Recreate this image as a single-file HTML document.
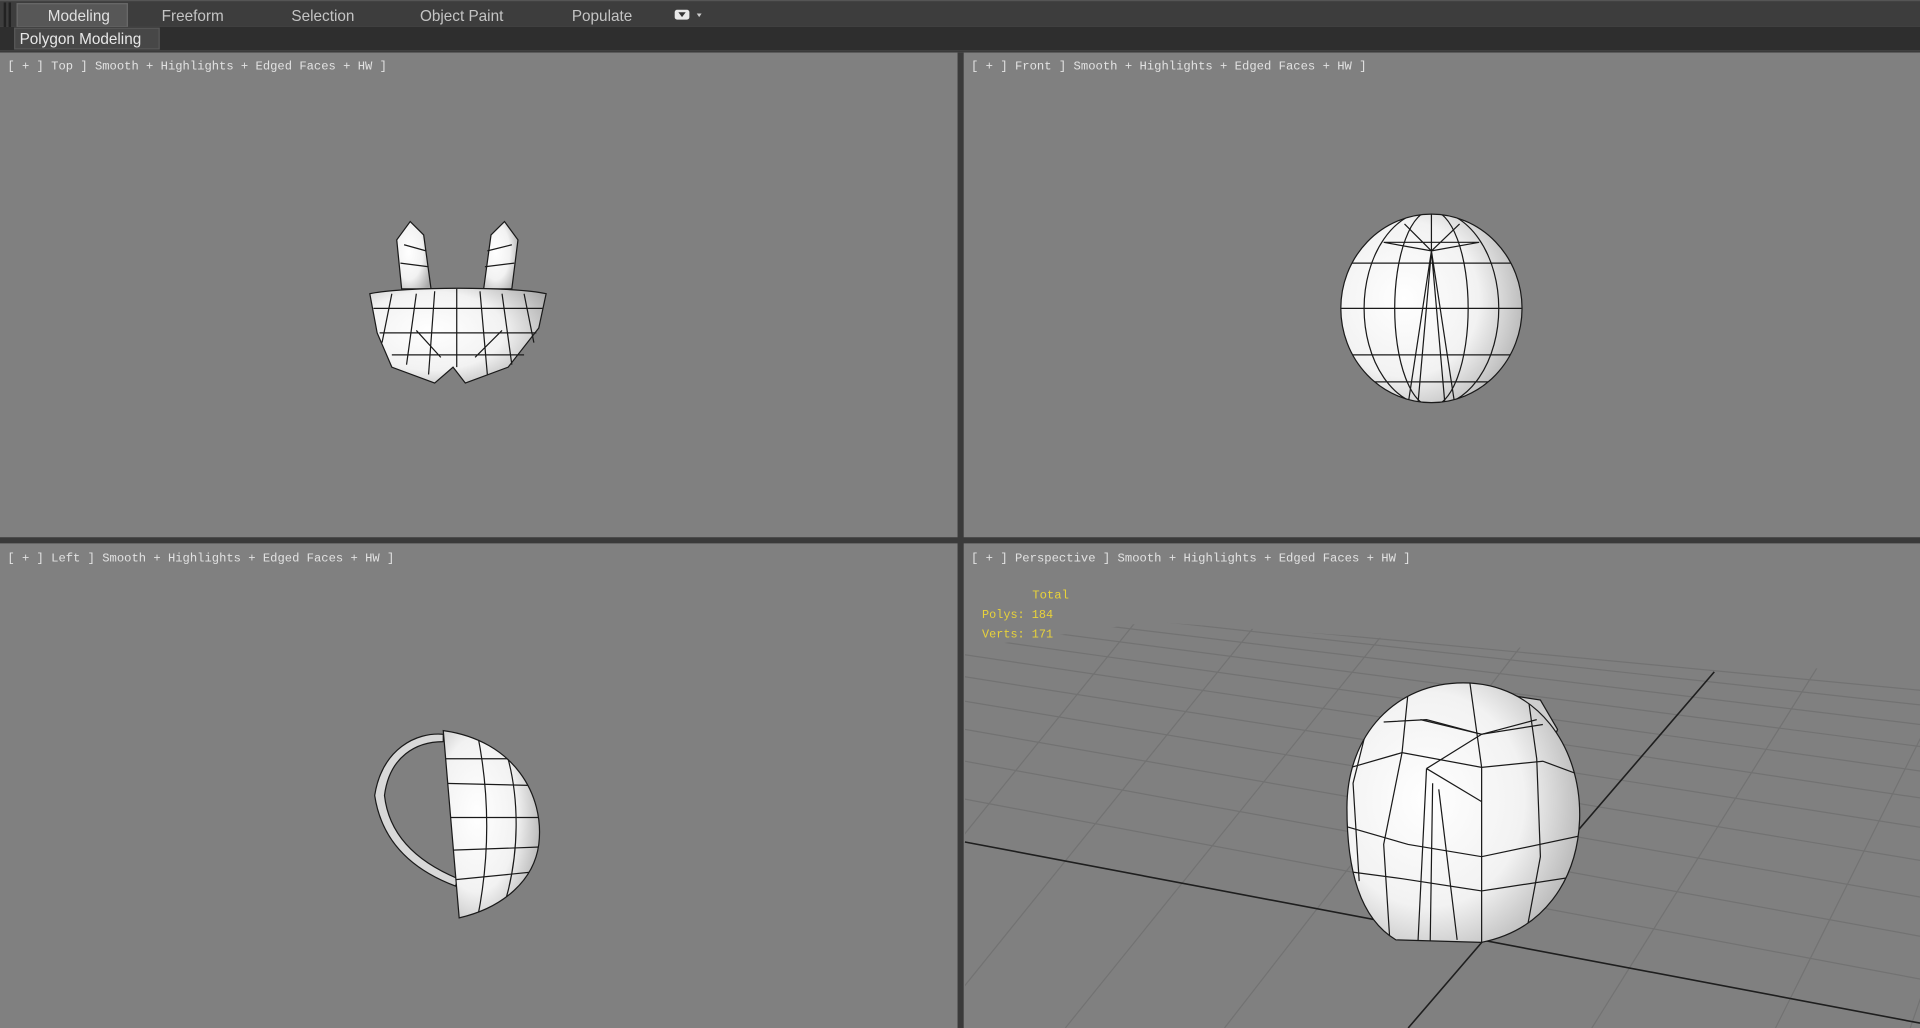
<!DOCTYPE html>
<html><head><meta charset="utf-8"><style>
html,body{margin:0;padding:0;width:1920px;height:1028px;overflow:hidden;background:#808080}
svg{display:block}
.lbl{font-family:"Liberation Mono","Noto Sans CJK SC",monospace;font-size:10px;fill:#e2e2e2}
.ui{font-family:"Liberation Sans",sans-serif;font-size:12.5px;fill:#c4c4c4}
.w{fill:none;stroke:#1a1a1a;stroke-width:1}
.f{fill:url(#g)}
</style></head><body>
<svg width="1920" height="1028" viewBox="0 0 1568 840" preserveAspectRatio="none" xmlns="http://www.w3.org/2000/svg">
<defs>
<radialGradient id="g" cx="0.35" cy="0.45" r="0.75"><stop offset="0" stop-color="#ffffff"/><stop offset="0.55" stop-color="#f2f2f2"/><stop offset="1" stop-color="#a8a8a8"/></radialGradient>
<clipPath id="cf"><ellipse cx="1169" cy="252" rx="74" ry="77"/></clipPath>
<clipPath id="cp"><path d="M1100,660 C1100,600 1140,558 1195,558 C1255,558 1292,610 1290,670 C1288,720 1260,760 1210,770 L1140,768 C1110,750 1100,710 1100,660Z"/></clipPath>
<clipPath id="grid"><polygon points="788,530 940,508 1568,552 1568,840 788,840"/></clipPath>
<clipPath id="cl"><path d="M362,597 C420,605 445,650 440,690 C436,720 410,742 375,750 Z"/></clipPath>
</defs>
<rect x="0" y="0" width="1568" height="22" fill="#3d3d3d"/>
<rect x="0" y="0" width="1568" height="1" fill="#555"/>
<rect x="3" y="2" width="2" height="38" fill="#222"/><rect x="7" y="2" width="2" height="38" fill="#222"/>
<rect x="14" y="3" width="90" height="19" fill="#575757" stroke="#6a6a6a"/>
<text class="ui" x="39" y="17" style="fill:#e0e0e0">Modeling</text>
<text class="ui" x="132" y="17">Freeform</text>
<text class="ui" x="238" y="17">Selection</text>
<text class="ui" x="343" y="17">Object Paint</text>
<text class="ui" x="467" y="17">Populate</text>
<rect x="551" y="8" width="12" height="8" rx="2" fill="#e8e8e8"/><path d="M554,10 L560,10 L557,14Z" fill="#333"/>
<path d="M569,11 L573,11 L571,14Z" fill="#ccc"/>
<rect x="0" y="22" width="1568" height="19" fill="#2e2e2e"/>
<rect x="12" y="23" width="118" height="17" fill="#474747" stroke="#5a5a5a"/>
<text class="ui" x="16" y="36" style="fill:#e8e8e8">Polygon Modeling</text>
<rect x="0" y="41" width="1568" height="2" fill="#3a3a3a"/>
<rect x="0" y="43" width="1568" height="797" fill="#808080"/>
<g clip-path="url(#grid)" stroke="#727272" stroke-width="1">
<line x1="788" y1="653" x2="1568" y2="800"/><line x1="788" y1="622" x2="1568" y2="765"/>
<line x1="788" y1="596" x2="1568" y2="733"/><line x1="788" y1="573" x2="1568" y2="703"/>
<line x1="788" y1="553" x2="1568" y2="676"/><line x1="788" y1="535" x2="1568" y2="652"/>
<line x1="800" y1="522" x2="1568" y2="630"/><line x1="850" y1="516" x2="1568" y2="610"/>
<line x1="900" y1="511" x2="1568" y2="592"/><line x1="950" y1="508" x2="1568" y2="576"/>
<line x1="1000" y1="510" x2="1568" y2="564"/>
<line x1="1000" y1="840" x2="1260" y2="505"/><line x1="870" y1="840" x2="1140" y2="505"/>
<line x1="760" y1="840" x2="1030" y2="505"/><line x1="660" y1="840" x2="930" y2="505"/>
<line x1="1300" y1="840" x2="1500" y2="520"/><line x1="1450" y1="840" x2="1590" y2="560"/>
<line x1="1560" y1="840" x2="1650" y2="580"/>
</g>
<line x1="788" y1="688" x2="1568" y2="836" stroke="#1e1e1e" stroke-width="1.3"/>
<line x1="1150" y1="840" x2="1400" y2="549" stroke="#1e1e1e" stroke-width="1.3"/>
<rect x="782" y="43" width="5" height="797" fill="#3a3a3a"/>
<rect x="0" y="439" width="1568" height="5" fill="#3a3a3a"/>
<text class="lbl" x="6" y="57" textLength="310" lengthAdjust="spacingAndGlyphs">[ + ] Top ] Smooth + Highlights + Edged Faces + HW ]</text>
<text class="lbl" x="793" y="57" textLength="323" lengthAdjust="spacingAndGlyphs">[ + ] Front ] Smooth + Highlights + Edged Faces + HW ]</text>
<text class="lbl" x="6" y="459" textLength="316" lengthAdjust="spacingAndGlyphs">[ + ] Left ] Smooth + Highlights + Edged Faces + HW ]</text>
<text class="lbl" x="793" y="459" textLength="359" lengthAdjust="spacingAndGlyphs">[ + ] Perspective ] Smooth + Highlights + Edged Faces + HW ]</text>
<text class="lbl" x="843" y="489" style="fill:#e8d23a" textLength="30" lengthAdjust="spacingAndGlyphs">Total</text>
<text class="lbl" x="802" y="505" style="fill:#e8d23a" textLength="58" lengthAdjust="spacingAndGlyphs">Polys: 184</text>
<text class="lbl" x="802" y="521" style="fill:#e8d23a" textLength="58" lengthAdjust="spacingAndGlyphs">Verts: 171</text>
<!-- top view -->
<path d="M328,236 L324,196 L335,181 L346,192 L352,236Z" class="w f"/>
<path d="M395,236 L401,192 L412,181 L423,196 L418,236Z" class="w f"/>
<path d="M330,200 L348,205 M327,215 L350,218 M398,205 L418,200 M396,218 L420,215" class="w"/>
<path d="M302,240 C330,234 420,234 446,240 L440,268 L415,300 L380,313 L370,300 L355,313 L320,300 L308,272Z" class="w f"/>
<path d="M305,252 L443,252 M310,272 L438,272 M320,290 L428,290 M340,240 L332,298 M355,238 L350,306 M373,236 L373,300 M392,238 L398,306 M410,240 L418,298 M320,240 L312,280 M428,240 L436,280 M340,270 L360,292 M410,270 L388,292" class="w"/>
<!-- front -->
<ellipse cx="1169" cy="252" rx="74" ry="77" class="f"/>
<g clip-path="url(#cf)" class="w">
<line x1="1090" y1="215" x2="1250" y2="215"/><line x1="1090" y1="252" x2="1250" y2="252"/>
<line x1="1090" y1="290" x2="1250" y2="290"/><line x1="1090" y1="312" x2="1250" y2="312"/>
<line x1="1169" y1="170" x2="1169" y2="205"/>
<ellipse cx="1169" cy="252" rx="30" ry="80"/><ellipse cx="1169" cy="252" rx="55" ry="80"/>
<path d="M1169,205 L1150,330 M1169,205 L1158,330 M1169,205 L1180,330 M1169,205 L1188,330 M1169,205 L1130,198 M1169,205 L1208,198 M1169,205 L1147,183 M1169,205 L1192,183 M1130,198 L1208,198"/>
</g>
<ellipse cx="1169" cy="252" rx="74" ry="77" class="w" stroke-width="1.3"/>
<!-- left -->
<path d="M362,600 C340,598 312,612 306,650 C312,690 340,712 372,724 L374,718 C345,706 318,686 314,650 C318,618 340,606 362,606Z" class="w" style="fill:#d8d8d8"/>
<path d="M362,597 C420,605 445,650 440,690 C436,720 410,742 375,750 Z" class="w f"/>
<g clip-path="url(#cl)" class="w">
<path d="M360,620 L440,620 M360,640 L442,642 M360,668 L445,668 M360,695 L445,692 M360,720 L440,712"/>
<path d="M390,600 C400,650 400,700 390,750 M412,610 C425,650 425,700 410,745"/>
</g>
<!-- perspective -->
<path d="M1232,568 L1258,572 L1272,596 L1268,606 L1250,580Z" class="w" style="fill:#cfcfcf"/>
<path d="M1100,660 C1100,600 1140,558 1195,558 C1255,558 1292,610 1290,670 C1288,720 1260,760 1210,770 L1140,768 C1110,750 1100,710 1100,660Z" class="f"/>
<g clip-path="url(#cp)" class="w">
<path d="M1100,628 L1145,615 L1210,627 L1260,622 L1295,635"/>
<path d="M1098,675 L1150,690 L1210,700 L1295,682"/>
<path d="M1100,712 L1145,718 L1210,728 L1295,715"/>
<path d="M1130,590 L1165,588 L1210,600 L1260,592"/>
<path d="M1150,565 L1145,615 L1130,690 L1135,768 M1200,555 L1210,627 L1210,770 M1248,570 L1255,620 L1258,700 L1245,770 M1115,600 L1105,640 L1110,720"/>
<path d="M1210,600 L1160,588 M1210,600 L1255,588 M1210,600 L1165,628 M1165,628 L1210,655 M1165,628 L1158,770 M1170,640 L1168,770 M1175,645 L1190,768"/>
</g>
<path d="M1100,660 C1100,600 1140,558 1195,558 C1255,558 1292,610 1290,670 C1288,720 1260,760 1210,770 L1140,768 C1110,750 1100,710 1100,660Z" class="w" stroke-width="1.3"/>
</svg>
</body></html>
